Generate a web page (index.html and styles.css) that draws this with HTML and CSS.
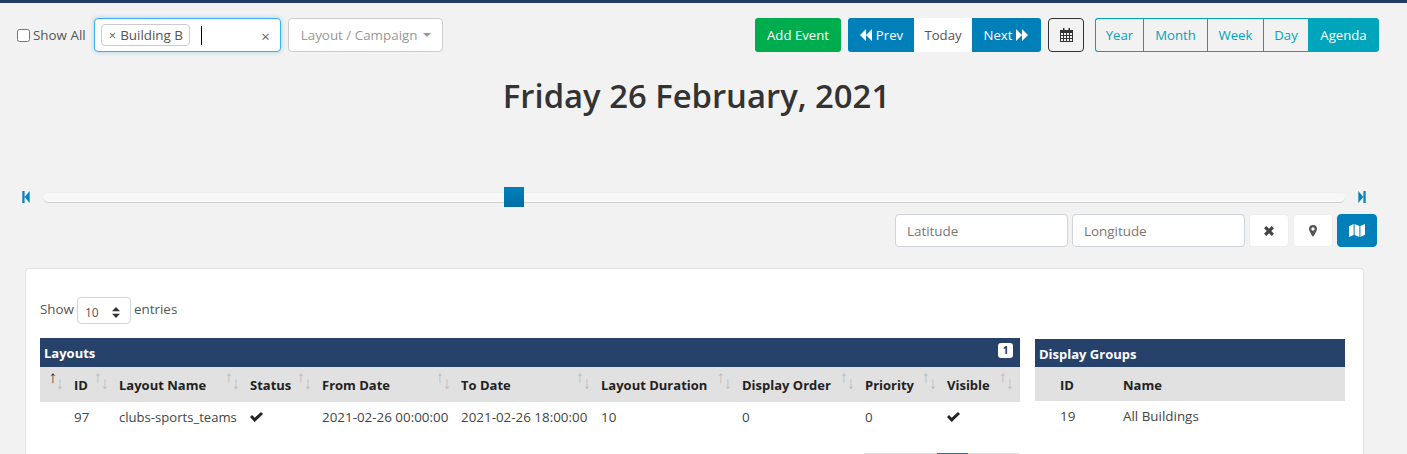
FILE: index.html
```html
<!DOCTYPE html>
<html lang="en">
<head>
<meta charset="utf-8">
<title>Schedule</title>
<link rel="stylesheet" href="styles.css">
</head>
<body>
<div class="topbar"></div>
<div class="toolbar">
  <label class="showall"><input type="checkbox"> Show All</label>
  <div class="tagbox">
    <span class="tag"><span class="tag-x">×</span> Building B</span>
    <span class="caret"></span>
    <span class="clear">×</span>
  </div>
  <div class="dropdown">Layout / Campaign <span class="tri"></span></div>
  <div class="spacer"></div>
  <button class="btn green">Add Event</button>
  <div class="group nav">
    <button class="btn blue"><svg class="ic14" viewBox="0 0 14 12"><path d="M7 0v12L1 6zM13 0v12L7 6z"/></svg> Prev</button>
    <button class="btn white">Today</button>
    <button class="btn blue">Next <svg class="ic14" viewBox="0 0 14 12"><path d="M1 0v12l6-6zM7 0v12l6-6z"/></svg></button>
  </div>
  <button class="btn cal"><svg width="13" height="14" viewBox="0 0 13 14"><path fill="#333" fill-rule="evenodd" d="M3 0h1.500v2H3zM8.500 0H10v2H8.500zM0 2h13v12H0zM1 5v2h2V5zm3 0v2h2V5zm3 0v2h2V5zm3 0v2h2V5zM1 8v2h2V8zm3 0v2h2V8zm3 0v2h2V8zm3 0v2h2V8zM1 11v2h2v-2zm3 0v2h2v-2zm3 0v2h2v-2zm3 0v2h2v-2z"/></svg></button>
  <div class="group views">
    <button class="view">Year</button>
    <button class="view">Month</button>
    <button class="view">Week</button>
    <button class="view">Day</button>
    <button class="view on">Agenda</button>
  </div>
</div>
<h1 class="title">Friday 26 February, 2021</h1>
<div class="slider">
  <svg class="step" viewBox="0 0 8 13"><path d="M0 0h2.500v13H0zM8 0v13L2.500 6.500z"/></svg>
  <div class="track"><div class="handle"></div></div>
  <svg class="step" viewBox="0 0 8 13"><path d="M0 0v13l5.500-6.500zM5.500 0H8v13H5.500z"/></svg>
</div>
<div class="geo">
  <div class="field lat">Latitude</div>
  <div class="field lng">Longitude</div>
  <button class="iconbtn"><svg width="10" height="10" viewBox="0 0 11 11"><path d="M0 2.500 2.500 0 5.500 3 8.500 0 11 2.500 8 5.500 11 8.500 8.500 11 5.500 8 2.500 11 0 8.500 3 5.500z" fill="#444"/></svg></button>
  <button class="iconbtn"><svg width="8" height="12" viewBox="0 0 8 12"><path fill="#555" fill-rule="evenodd" d="M4 0a4 4 0 0 1 4 4c0 1.800-2.500 5.800-4 8C2.500 9.800 0 5.800 0 4a4 4 0 0 1 4-4zm0 2.300a1.700 1.700 0 1 0 0 3.400 1.700 1.700 0 0 0 0-3.400z"/></svg></button>
  <button class="iconbtn mapbtn"><svg width="16" height="15" viewBox="0 0 16 15"><path fill="#fff" d="M0 3.200 4.600 1v11L0 14zM5.600 1l4.800 2v11l-4.800-2zM11.400 3 16 1v10.800L11.400 14z"/></svg></button>
</div>
<section class="card">
  <div class="length">Show <span class="select">10 <svg width="8" height="11" viewBox="0 0 8 11"><path fill="#333" d="M4 0l4 4.300H0zM4 11 0 6.700h8z"/></svg></span> entries</div>
  <div class="tables">
    <div class="tbl-layouts">
      <div class="caption">Layouts <span class="badge">1</span></div>
      <table class="data">
        <colgroup>
          <col class="c1"><col class="c2"><col class="c3"><col class="c4"><col class="c5"><col class="c6"><col class="c7"><col class="c8"><col class="c9"><col class="c10">
        </colgroup>
        <thead>
          <tr>
            <th class="sort first"></th><th class="sort">ID</th><th class="sort">Layout Name</th><th class="sort">Status</th><th class="sort">From Date</th><th class="sort">To Date</th><th class="sort">Layout Duration</th><th class="sort">Display Order</th><th class="sort">Priority</th><th class="sort">Visible</th>
          </tr>
        </thead>
        <tbody>
          <tr>
            <td></td><td>97</td><td class="nm">clubs-sports_teams</td>
            <td><svg class="check" viewBox="0 0 13 10"><path d="M0 5l2-2 2.700 2.700L11 0l2 2-8.300 8z"/></svg></td>
            <td>2021-02-26 00:00:00</td><td>2021-02-26 18:00:00</td><td>10</td><td>0</td><td>0</td>
            <td><svg class="check" viewBox="0 0 13 10"><path d="M0 5l2-2 2.700 2.700L11 0l2 2-8.300 8z"/></svg></td>
          </tr>
        </tbody>
      </table>
      <div class="pager"><span class="pg-cur"></span></div>
    </div>
    <div class="tbl-groups">
      <div class="caption">Display Groups</div>
      <table class="data">
        <colgroup><col class="g1"><col class="g2"><col class="g3"></colgroup>
        <thead><tr><th></th><th>ID</th><th>Name</th></tr></thead>
        <tbody><tr><td></td><td>19</td><td>All Buildings</td></tr></tbody>
      </table>
    </div>
  </div>
</section>
</body>
</html>
```
FILE: styles.css
```css
* { box-sizing: border-box; }
html, body { margin: 0; height: 454px; overflow: hidden; }
body { background: #f2f2f2; font-family: "Open Sans", sans-serif; font-size: 13.4px; color: #444; }
button { font-family: inherit; font-size: 13.2px; cursor: pointer; }
.topbar { height: 3px; background: #1f3a63; }
.toolbar { display: flex; align-items: center; height: 34px; margin: 15px 28px 0 17px; }
.showall { display: flex; align-items: center; gap: 3px; color: #555; margin-right: 8px; }
.showall input { margin: 0; width: 13px; height: 13px; }
.tagbox { display: flex; align-items: center; position: relative; width: 187px; height: 34px; background: #fff; border: 1px solid #3fb0ee; border-radius: 4px; box-shadow: 0 0 4px rgba(63,176,238,.5); padding-left: 6px; margin-right: 7px; }
.tag { display: flex; align-items: center; gap: 4px; height: 22px; padding: 0 6px 0 7px; border: 1px solid #ccc; border-radius: 4px; color: #555; }
.tag-x { color: #666; font-size: 13px; }
.caret { width: 1px; height: 19px; background: #000; margin-left: 11px; }
.clear { position: absolute; right: 10px; top: 7px; font-size: 15px; color: #666; }
.dropdown { display: flex; align-items: center; gap: 5px; width: 155px; height: 34px; background: #fff; border: 1px solid #ccc; border-radius: 4px; padding-left: 12px; color: #999; }
.tri { width: 0; height: 0; border: 4px solid transparent; border-top-color: #999; border-bottom: 0; }
.spacer { flex: 1; }
.btn { height: 34px; border: 0; padding: 0; display: inline-flex; align-items: center; justify-content: center; gap: 3px; }
.green { width: 86px; background: #00ad4e; color: #fff; border-radius: 3px; margin-right: 7px; }
.group { display: flex; }
.nav { margin-right: 7px; }
.blue { background: #007fb9; color: #fff; fill: #fff; }
.nav .blue:first-child { width: 66px; border-radius: 3px 0 0 3px; }
.nav .blue:last-child { width: 69px; border-radius: 0 3px 3px 0; }
.white { width: 58px; background: #fff; color: #555; }
.ic14 { width: 14px; height: 12px; }
.cal { width: 36px; background: #f2f2f2; border: 1px solid #333; border-radius: 4px; margin-right: 11px; }
.views { height: 34px; }
.view { height: 34px; padding: 0; background: transparent; color: #00a5bb; border: 1px solid #00a5bb; border-right: 0; }
.view:nth-child(1) { width: 48px; border-radius: 3px 0 0 3px; }
.view:nth-child(2) { width: 64px; }
.view:nth-child(3) { width: 56px; }
.view:nth-child(4) { width: 45px; }
.view.on { width: 71px; background: #00a5bb; color: #fff; border-radius: 0 3px 3px 0; border: 1px solid #00a5bb; }
.title { margin: 20px 14px 0 0; height: 50px; line-height: 47px; text-align: center; font-size: 32.8px; font-weight: 600; color: #333; }
.slider { display: flex; align-items: center; gap: 13px; margin: 63px 0 0 22px; height: 24px; width: 1344px; }
.step { width: 8px; height: 12px; fill: #0a84bb; flex: none; }
.track { flex: 1; height: 11px; background: #f7f7f7; border-radius: 6px; border-top: 1px solid #f0f0f0; border-bottom: 1px solid #d0d0d0; position: relative; }
.handle { position: absolute; left: 461px; top: -6px; width: 20px; height: 20px; background: linear-gradient(#0080bb, #006da5); }
.geo { display: flex; justify-content: flex-end; gap: 4px; margin: 5px 30px 0 0; height: 33px; }
.field { height: 33px; background: #fff; border: 1px solid #ced4da; border-radius: 4px; color: #777; padding: 0 11px; line-height: 33px; }
.lat { width: 173px; }
.lng { width: 173px; }
.iconbtn { width: 40px; height: 33px; padding: 0; background: #fff; border: 1px solid #eee; border-radius: 4px; display: flex; align-items: center; justify-content: center; }
.mapbtn { background: #007fb9; border-color: #007fb9; }
.card { margin: 21px 43px 0 25px; height: 186px; background: #fff; border: 1px solid #e2e2e2; border-bottom: 0; border-radius: 4px 4px 0 0; padding: 28px 18px 0 14px; }
.length { display: flex; align-items: flex-start; gap: 3px; height: 27px; line-height: 25px; color: #555; }
.select { display: inline-flex; align-items: center; justify-content: space-between; width: 54px; height: 27px; border: 1px solid #ced4da; border-radius: 4px; padding: 3px 10px 0 7px; font-size: 12px; }
.tables { display: flex; gap: 15px; margin-top: 14px; }
.tbl-layouts { width: 980px; }
.tbl-groups { width: 310px; padding-top: 1px; }
.caption { position: relative; height: 29px; line-height: 30px; background: #27426a; color: #fff; font-weight: 700; font-size: 13px; padding-left: 4px; }
.tbl-groups .caption { height: 28px; line-height: 30px; }
.badge { position: absolute; right: 7px; top: 5px; width: 15px; height: 15px; background: #fff; color: #333; border-radius: 3px; font-size: 10px; line-height: 15px; text-align: center; }
.data { width: 100%; table-layout: fixed; border-collapse: collapse; }
.data th { position: relative; height: 35px; background: #e1e1e1; color: #222; font-weight: 700; font-size: 13px; text-align: left; padding: 0 4px; white-space: nowrap; }
.tbl-groups .data th { height: 34px; padding-top: 2px; }
.data td { height: 32px; padding: 0 4px 2px; color: #444; white-space: nowrap; }
.data .nm { font-size: 13.1px; }
.sort::before, .sort::after { position: absolute; font-family: "Liberation Sans", sans-serif; font-size: 17px; font-weight: 400; line-height: 14px; color: #bbb; }
.sort::before { content: "↑"; right: 13px; top: 4px; }
.sort::after { content: "↓"; right: 6px; top: 10px; }
.first::before { color: #333; }
.c1 { width: 30px; } .c2 { width: 45px; } .c3 { width: 131px; } .c4 { width: 72px; } .c5 { width: 139px; }
.c6 { width: 140px; } .c7 { width: 141px; } .c8 { width: 123px; } .c9 { width: 82px; } .c10 { width: 77px; }
.g1 { width: 21px; } .g2 { width: 63px; } .g3 { width: 226px; }
.check { width: 13px; height: 10px; fill: #222; display: block; }
.pager { position: relative; width: 155px; height: 2px; margin: 19px 0 0 824px; background: #e2e2e2; }
.pg-cur { position: absolute; left: 73px; width: 31px; height: 2px; background: #0c79ae; }
```
